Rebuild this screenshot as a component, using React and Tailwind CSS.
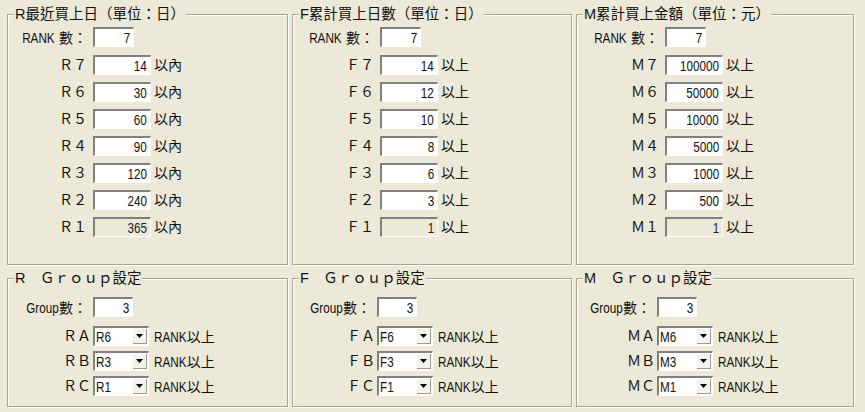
import React from 'react';

const panels = [
  {
    title: 'R最近買上日（單位：日）',
    key: 'Ｒ',
    suffix: '以內',
    labelW: 'w-[85px]',
    values: [14, 30, 60, 90, 120, 240, 365],
  },
  {
    title: 'F累計買上日數（單位：日）',
    key: 'Ｆ',
    suffix: '以上',
    labelW: 'w-[87px]',
    values: [14, 12, 10, 8, 6, 3, 1],
  },
  {
    title: 'M累計買上金額（單位：元）',
    key: 'Ｍ',
    suffix: '以上',
    labelW: 'w-[88px]',
    values: [100000, 50000, 10000, 5000, 1000, 500, 1],
  },
];

const groups = [
  { title: 'R　Ｇｒｏｕｐ設定', key: 'Ｒ', latin: 'R', labelW: 'w-[85px]' },
  { title: 'F　Ｇｒｏｕｐ設定', key: 'Ｆ', latin: 'F', labelW: 'w-[84px]' },
  { title: 'M　Ｇｒｏｕｐ設定', key: 'Ｍ', latin: 'M', labelW: 'w-[80px]' },
];

const picks = [
  { name: 'Ａ', rank: 6 },
  { name: 'Ｂ', rank: 3 },
  { name: 'Ｃ', rank: 1 },
];

// the old dialog font is a narrow one, squeeze latin text to match
function Narrow({ children, right }) {
  return (
    <span className={`inline-block text-[15px] scale-x-[0.78] ${right ? 'origin-right' : 'origin-left'}`}>
      {children}
    </span>
  );
}

function Box({ value, w, disabled }) {
  return (
    <div
      className={`h-[20px] ${w} flex items-center justify-end pr-[3px] border-t-2 border-l-2 border-r border-b border-t-[#808080] border-l-[#808080] border-r-white border-b-white leading-none ${
        disabled ? 'bg-[#ece9d8] text-[#222]' : 'bg-white'
      }`}
    >
      <Narrow right>{value}</Narrow>
    </div>
  );
}

function Combo({ value }) {
  return (
    <div className="h-[20px] w-[56px] flex items-stretch bg-white border-t-2 border-l-2 border-r border-b border-t-[#808080] border-l-[#808080] border-r-white border-b-white">
      <div className="flex-1 flex items-center pl-[1px] leading-none">
        <Narrow>{value}</Narrow>
      </div>
      <div className="w-[14px] my-[1px] mr-[1px] flex items-center justify-center bg-[#f4f3ee] border-r border-b border-r-[#9a9a9a] border-b-[#9a9a9a]">
        <svg width="7" height="4" viewBox="0 0 7 4">
          <polygon points="0,0 7,0 3.5,4" fill="#000" />
        </svg>
      </div>
    </div>
  );
}

function Frame({ title, height, pad, children }) {
  return (
    <fieldset
      className={`${height} ${pad} border border-[#a7a493] shadow-[inset_1px_1px_0_#fff,1px_1px_0_#fff]`}
    >
      <legend className="ml-[6px] px-[1px] leading-[16px] text-[14.5px] bg-[#ece9d8]">{title}</legend>
      {children}
    </fieldset>
  );
}

export default function App() {
  return (
    <div className="w-[865px] h-[412px] overflow-hidden bg-[#ece9d8] text-[#111] pt-[6px] pl-[7px] font-['Liberation_Sans','Noto_Sans_CJK_TC',sans-serif]">
      <div className="grid grid-cols-[281px_280px_278px] gap-x-[4px] gap-y-[5px]">
        {panels.map((p) => (
          <Frame key={p.title} title={p.title} height="h-[259px]" pad="pt-[5px]">
            <div className="flex flex-col gap-[7px]">
              <div className="flex items-center">
                <div className={`${p.labelW} pr-[6px] text-right text-[14px] leading-none`}>
                  <Narrow right>RANK</Narrow> 數：
                </div>
                <Box value={7} w="w-[41px]" />
              </div>
              <div className="mt-[1px] flex flex-col gap-[7px]">
                {p.values.map((v, i) => (
                  <div key={i} className="flex items-center">
                    <div className={`${p.labelW} pr-[6px] text-right text-[14px] leading-none`}>
                      {p.key}
                      {['７', '６', '５', '４', '３', '２', '１'][i]}
                    </div>
                    <Box value={v} w="w-[58px]" disabled={i === 6} />
                    <span className="ml-[3px] text-[14px] leading-none">{p.suffix}</span>
                  </div>
                ))}
              </div>
            </div>
          </Frame>
        ))}

        {groups.map((g) => (
          <Frame key={g.title} title={g.title} height="h-[137px]" pad="pt-[11px]">
            <div className="flex items-center">
              <div className={`${g.labelW} pr-[6px] text-right text-[14px] leading-none`}>
                <Narrow right>Group</Narrow>數：
              </div>
              <Box value={3} w="w-[40px]" />
            </div>
            <div className="mt-[9px] flex flex-col gap-[5px]">
              {picks.map((k) => (
                <div key={k.name} className="flex items-center">
                  <div className={`${g.labelW} pr-[2px] text-right text-[14px] leading-none`}>
                    {g.key}
                    {k.name}
                  </div>
                  <Combo value={`${g.latin}${k.rank}`} />
                  <span className="ml-[5px] text-[14px] leading-none">
                    <span className="inline-block text-[15px] scale-x-[0.78] origin-left mr-[-9px]">RANK</span>以上
                  </span>
                </div>
              ))}
            </div>
          </Frame>
        ))}
      </div>
    </div>
  );
}
